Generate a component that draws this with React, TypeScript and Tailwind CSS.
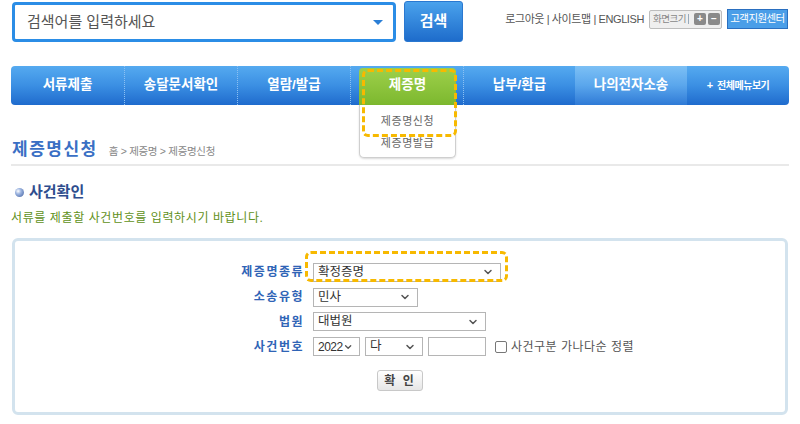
import React from 'react'
import { ChevronDown } from 'lucide-react'

const font = { fontFamily: '"Liberation Sans", "Noto Sans CJK KR", sans-serif' }

const navItems = ['서류제출', '송달문서확인', '열람/발급', '제증명', '납부/환급', '나의전자소송']

function Select({ value, width, small }: { value: string; width: string; small?: boolean }) {
    return (
        <div className={`${width} h-[19px] border border-[#b5b5b5] bg-white flex items-center justify-between pl-[4px] pr-[6px]`}>
            <span className={`${small ? 'text-[12px] tracking-[-0.5px]' : 'text-[12.5px]'} text-[#333] leading-none`}>{value}</span>
            <ChevronDown size={12} strokeWidth={3} className="text-[#555]" />
        </div>
    )
}

export default function App() {
    return (
        <div style={font} className="w-[800px] h-[424px] bg-white relative overflow-hidden">
            {/* header */}
            <div className="flex items-start h-[44px] pt-[2px] pl-[12px] pr-[12px]">
                <div className="w-[384px] h-[40px] border-[3px] border-[#2b8de6] rounded-[4px] flex items-center justify-between pl-[12px] pr-[10px]">
                    <span className="text-[15px] text-[#555]">검색어를 입력하세요</span>
                    <span className="w-0 h-0 border-l-[5px] border-r-[5px] border-t-[5px] border-l-transparent border-r-transparent border-t-[#2b7fd6]" />
                </div>
                <button className="ml-[8px] w-[59px] h-[41px] -mt-[1px] rounded-[3px] bg-gradient-to-b from-[#4aa2ec] to-[#1e6ccb] border border-[#2a78d0] text-white font-bold text-[15px]">
                    검색
                </button>
                <div className="ml-auto flex items-center mt-[7px] gap-[5px]">
                    <span className="text-[11px] text-[#555] tracking-[-0.4px]">로그아웃 | 사이트맵 | ENGLISH</span>
                    <div className="h-[19px] w-[73px] bg-[#efefef] border border-[#bdbdbd] rounded-[2px] flex items-center pl-[3px] gap-[2px]">
                        <span className="text-[9.5px] text-[#888] tracking-[-0.5px]">화면크기</span>
                        <span className="w-px h-[10px] bg-[#9ab]" />
                        <span className="ml-[3px] w-[12px] h-[12px] bg-[#8a8a8a] rounded-[2px] text-white text-[10px] leading-[12px] text-center font-bold">+</span>
                        <span className="w-[12px] h-[12px] bg-[#8a8a8a] rounded-[2px] text-white text-[10px] leading-[11px] text-center font-bold">−</span>
                    </div>
                    <div className="h-[20px] w-[61px] bg-[#4a9ee8] border border-[#2a6fc0] flex items-center justify-center">
                        <span className="text-[10.5px] text-white tracking-[-0.6px]">고객지원센터</span>
                    </div>
                </div>
            </div>

            {/* nav */}
            <div className="mt-[22px] mx-[11px] h-[39px] rounded-[4px] bg-gradient-to-b from-[#55aaf0] via-[#3b8fe3] to-[#1f6bcd] flex relative">
                {navItems.map((item, i) => {
                    if (item === '제증명') {
                        return (
                            <div key={item} className="w-[113px] relative border-l border-dotted border-[#8cc0f2] flex">
                                <div className="w-[97px] h-[37px] ml-[8px] mt-[2px] rounded-t-[4px] bg-gradient-to-b from-[#9ed04a] to-[#7cb82e] flex items-center justify-center">
                                    <span className="text-white font-bold text-[13.5px] -mt-[2px]">{item}</span>
                                </div>
                                <div className="absolute left-[8px] top-[39px] w-[97px] h-[53px] bg-white border border-t-0 border-[#cfcfcf] rounded-b-[5px] shadow-[0_1px_2px_rgba(0,0,0,0.15)] flex flex-col items-center pt-[9px] gap-[8px] z-10">
                                    <span className="text-[11px] text-[#666] tracking-[0.6px] leading-[14px]">제증명신청</span>
                                    <span className="text-[11px] text-[#666] tracking-[0.6px] leading-[14px]">제증명발급</span>
                                </div>
                                <div className="absolute left-[11px] top-[3px] w-[95px] h-[68px] border-[3px] border-dashed border-[#f7b900] rounded-[6px] z-20" />
                            </div>
                        )
                    }
                    const active = item === '나의전자소송'
                    return (
                        <div
                            key={item}
                            className={`${i === 4 || i === 5 ? 'w-[112px]' : 'w-[113px]'} ${i > 0 && !active ? 'border-l border-dotted border-[#8cc0f2]' : ''} ${active ? 'bg-gradient-to-b from-[#7cc0f5] via-[#5aa6ec] to-[#2f7ad6]' : ''} flex items-center justify-center`}
                        >
                            <span className="text-white font-bold text-[13.5px]">{item}</span>
                        </div>
                    )
                })}
                <div className="flex-1 flex items-center justify-center gap-[4px]">
                    <span className="text-white font-bold text-[11px]">+</span>
                    <span className="text-white font-bold text-[10px] tracking-[-0.5px]">전체메뉴보기</span>
                </div>
            </div>

            {/* title */}
            <div className="mx-[11px] h-[61px] border-b-2 border-[#e9e9e9] flex items-end pb-[4px] pl-[1px]">
                <span className="text-[17px] font-bold text-[#3a6fc4] tracking-[1.5px] leading-[20px]">제증명신청</span>
                <span className="ml-[11px] text-[10.5px] text-[#888] leading-[18px] tracking-[-0.3px]">홈 &gt; 제증명 &gt; 제증명신청</span>
            </div>

            {/* section */}
            <div className="mx-[11px] mt-[16px] flex items-center h-[20px] pl-[4px] gap-[5px]">
                <span className="w-[9px] h-[9px] rounded-full bg-[radial-gradient(circle_at_35%_35%,#ffffff_0%,#9db5e0_35%,#3e5c9e_100%)]" />
                <span className="text-[15px] font-bold text-[#2e4d8e]">사건확인</span>
            </div>
            <div className="mx-[11px] mt-[8px] h-[16px] text-[12px] text-[#5f9121] leading-[16px] tracking-[0.6px]">
                서류를 제출할 사건번호를 입력하시기 바랍니다.
            </div>

            {/* form */}
            <div className="mx-[12px] mt-[12px] h-[177px] border-[3px] border-[#d3e3ee] rounded-[6px] pt-[21px] relative">
                <div className="flex flex-col gap-[5px]">
                    <div className="flex items-center h-[20px]">
                        <label className="w-[289px] text-right text-[12px] font-bold text-[#2f64b6] tracking-[1.5px]">제증명종류</label>
                        <div className="ml-[9px]">
                            <Select value="확정증명" width="w-[188px]" />
                        </div>
                    </div>
                    <div className="flex items-center h-[20px]">
                        <label className="w-[289px] text-right text-[12px] font-bold text-[#2f64b6] tracking-[1.5px]">소송유형</label>
                        <div className="ml-[9px]">
                            <Select value="민사" width="w-[105px]" />
                        </div>
                    </div>
                    <div className="flex items-center h-[19px]">
                        <label className="w-[289px] text-right text-[12px] font-bold text-[#2f64b6] tracking-[1.5px]">법원</label>
                        <div className="ml-[9px]">
                            <Select value="대법원" width="w-[173px]" />
                        </div>
                    </div>
                    <div className="flex items-center h-[21px]">
                        <label className="w-[289px] text-right text-[12px] font-bold text-[#2f64b6] tracking-[1.5px]">사건번호</label>
                        <div className="ml-[9px] flex items-center gap-[5px]">
                            <Select value="2022" width="w-[47px]" small />
                            <Select value="다" width="w-[58px]" />
                            <div className="w-[58px] h-[19px] border border-[#b5b5b5] bg-white" />
                            <div className="ml-[4px] w-[12px] h-[12px] border border-[#777] rounded-[2px] bg-white" />
                            <span className="text-[12px] text-[#555] ml-[-1px] tracking-[0.5px]">사건구분 가나다순 정렬</span>
                        </div>
                    </div>
                </div>
                <div className="flex justify-center mt-[13px]">
                    <button className="w-[46px] h-[21px] border border-[#c8c8c8] rounded-[3px] bg-gradient-to-b from-white to-[#e6e6e6] text-[12px] font-bold text-[#444] tracking-[2px]">
                        확 인
                    </button>
                </div>
                <div className="absolute left-[290px] top-[10px] w-[203px] h-[31px] border-[3px] border-dashed border-[#f7b900] rounded-[6px]" />
            </div>
        </div>
    )
}
